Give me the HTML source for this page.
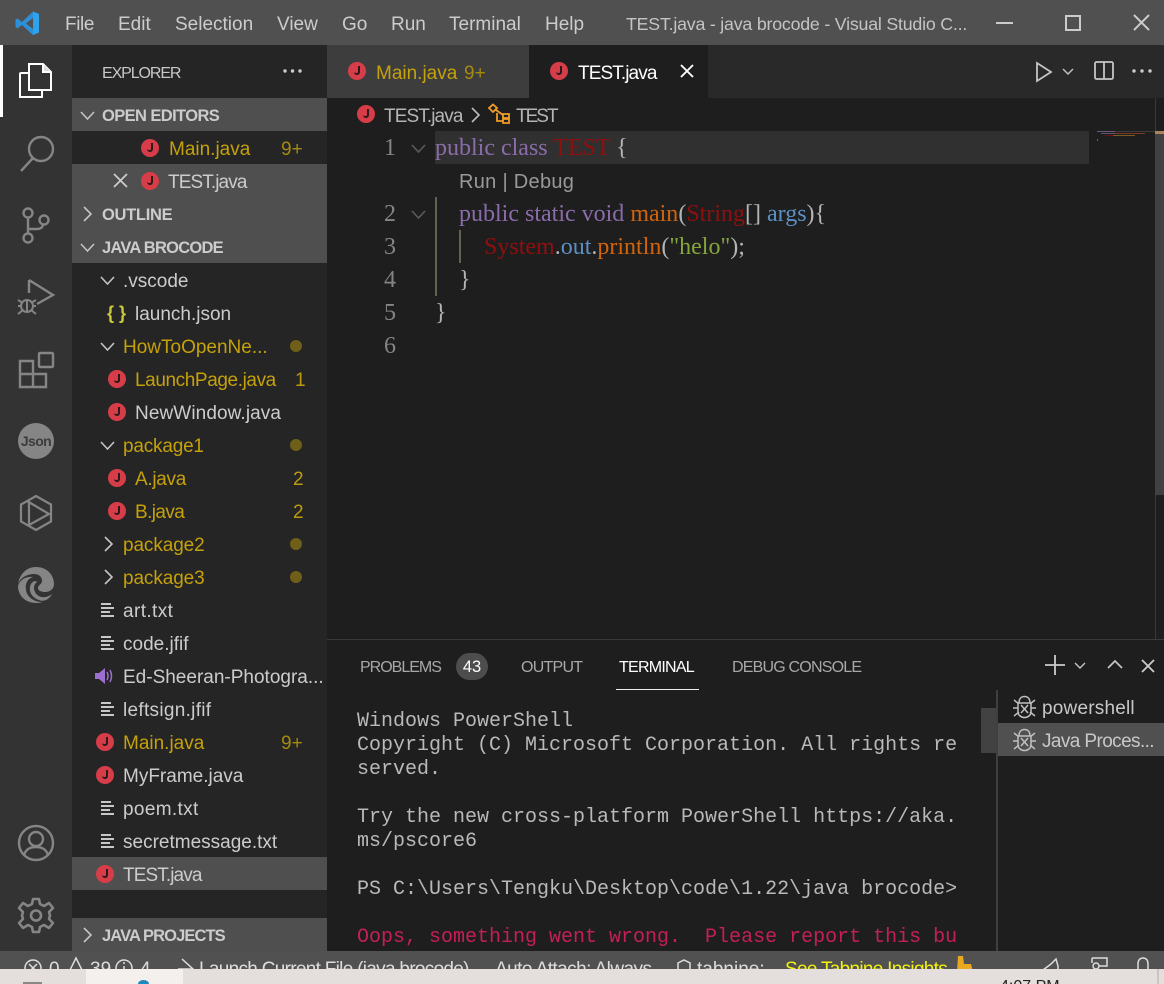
<!DOCTYPE html>
<html><head><meta charset="utf-8"><style>
html,body{margin:0;padding:0;width:1164px;height:984px;overflow:hidden;background:#1e1e1e}
body{position:relative;font-family:"Liberation Sans",sans-serif;font-size:19px;color:#ccc}
.a{position:absolute}
.t{position:absolute;white-space:pre;line-height:33px;height:33px;margin-top:2px}
.r{position:absolute;left:72px;width:255px;height:33px}
.h{font-weight:bold;font-size:16.5px;color:#ccc}
.y{color:#c5a10a}
.d{color:#a58a10}
.j{position:absolute;width:18px;height:18px;border-radius:50%;background:#d63d48}
.j:after{content:"";position:absolute;left:6px;top:4px;width:4px;height:7px;border:solid #2a1a1a;border-width:0 2px 2px 0;border-radius:0 0 3px 3px}
.dot{position:absolute;width:12px;height:12px;border-radius:50%;background:#6f5f18}
.m{position:absolute;font-family:"Liberation Mono",monospace;font-size:20px;line-height:24px;height:24px;white-space:pre;color:#b9b9b9;margin-top:2px}
.c{position:absolute;left:0;font-family:"Liberation Serif",serif;font-size:24px;line-height:33px;height:33px;white-space:pre;color:#b4b4b4;margin-top:1px}
.n{position:absolute;font-family:"Liberation Serif",serif;font-size:24px;line-height:33px;color:#858585;width:62px;text-align:right;left:334px;margin-top:1px}
.kw{color:#8a6cab}.cl{color:#8f0f0f}.fn{color:#d2640c}.v{color:#5c8fc4}.s{color:#85a53c}
.p{font-size:16px;letter-spacing:-.75px}
svg{position:absolute;overflow:visible}
</style></head><body>
<!-- title bar -->
<div class="a" style="left:0;top:0;width:1164px;height:45px;background:#505050"></div>
<svg style="left:15px;top:11px" width="25" height="25" viewBox="0 0 25 25"><path d="M18 0.5L24 3V21.5L18 24L7 14L2.5 17.5L0.5 16V8.5L2.5 7.5L7 11L18 0.5Z" fill="#2d8fd8"/><path d="M18 7L11 12.5L18 18Z" fill="#505050"/><path d="M18 0.5L24 3V21.5L18 24Z" fill="#2ea2ec"/></svg>
<span class="t" style="left:65px;top:6px;color:#ccc;letter-spacing:-.4px">File</span>
<span class="t" style="left:118px;top:6px;color:#ccc">Edit</span>
<span class="t" style="left:175px;top:6px;color:#ccc">Selection</span>
<span class="t" style="left:277px;top:6px;color:#ccc">View</span>
<span class="t" style="left:342px;top:6px;color:#ccc">Go</span>
<span class="t" style="left:391px;top:6px;color:#ccc">Run</span>
<span class="t" style="left:449px;top:6px;color:#ccc">Terminal</span>
<span class="t" style="left:545px;top:6px;color:#ccc">Help</span>
<span class="t" style="left:626px;top:6px;color:#c4c4c4;font-size:17.8px;letter-spacing:-.21px">TEST.java - java brocode - Visual Studio C...</span>
<div class="a" style="left:996px;top:22px;width:17px;height:2px;background:#ccc"></div>
<div class="a" style="left:1065px;top:15px;width:12px;height:12px;border:2px solid #ccc"></div>
<svg style="left:1133px;top:14px" width="18" height="18"><path d="M1 1L16 16M16 1L1 16" stroke="#ccc" stroke-width="2"/></svg>
<!-- activity bar -->
<div class="a" style="left:0;top:45px;width:72px;height:906px;background:#333"></div>
<div class="a" style="left:0;top:45px;width:3px;height:72px;background:#fff"></div>
<svg style="left:19px;top:63px" width="34" height="36" fill="none" stroke="#fff" stroke-width="2"><path d="M10 10H2Q1 10 1 11V34H23V28"/><path d="M10 1H24L32 9V27H10Z" fill="#333"/><path d="M24 1V9H32" fill="#ddd"/></svg>
<svg style="left:20px;top:135px" width="34" height="36" fill="none" stroke="#858585" stroke-width="2.4"><circle cx="21" cy="14" r="12"/><path d="M13 23L1 36"/></svg>
<svg style="left:22px;top:207px" width="30" height="37" fill="none" stroke="#858585" stroke-width="2.4"><circle cx="6" cy="6" r="4.5"/><circle cx="6" cy="31" r="4.5"/><circle cx="22" cy="13" r="4.5"/><path d="M6 11V26M6 22H15Q20 22 21 18"/></svg>
<svg style="left:18px;top:279px" width="37" height="38" fill="none" stroke="#858585" stroke-width="2.4"><path d="M11 1L35 16L19 25M11 1V14"/><circle cx="9" cy="27" r="6" stroke-width="2"/><path d="M0 21L5 24M18 21L13 24M0 27H4M14 27H18M0 35L5 31M18 35L13 31M9 22V33" stroke-width="2"/></svg>
<svg style="left:18px;top:351px" width="37" height="37" fill="none" stroke="#858585" stroke-width="2.4"><path d="M2 10H15V36H2ZM2 23H28V36H15"/><rect x="21" y="2" width="14" height="14" rx="1"/></svg>
<div class="a" style="left:18px;top:423px;width:36px;height:36px;border-radius:50%;background:#858585"></div>
<span class="a" style="left:18px;top:430px;width:36px;text-align:center;font:bold 14px/22px 'Liberation Sans',sans-serif;color:#3c3c3c;letter-spacing:-.6px">Json</span>
<svg style="left:20px;top:495px" width="32" height="36" fill="none" stroke="#858585" stroke-width="2.2"><path d="M16 1L31 9.5V26.5L16 35L1 26.5V9.5Z"/><path d="M9 6V30L29 19L7 6"/></svg>
<svg style="left:18px;top:567px" width="36" height="36" viewBox="0 0 36 36"><path d="M18 0C29 0 36 8 36 17C36 22 32 25 27 25C24 25 20 24 20 21C20 18 24 17 24 14C24 9 20 7 16 7C8 7 1 12 0 18C1 8 8 0 18 0Z" fill="#858585"/><path d="M0 19C2 12 9 9 15 10C9 12 7 17 8 23C9 30 16 35 24 35C22 36 20 36 18 36C8 36 0 29 0 19Z" fill="#858585"/><path d="M12 20C13 14 18 13 19 15C16 17 15 21 17 25C20 31 28 32 34 27C31 33 25 35 21 33C15 31 11 26 12 20Z" fill="#858585"/></svg>
<svg style="left:18px;top:825px" width="36" height="36" fill="none" stroke="#858585" stroke-width="2.4"><circle cx="18" cy="18" r="17"/><circle cx="18" cy="14" r="7"/><path d="M6 30C8 24 12 22 18 22C24 22 28 24 30 30"/></svg>
<svg style="left:17px;top:897px" width="38" height="37" viewBox="0 0 38 37" fill="none" stroke="#858585" stroke-width="2.6"><circle cx="19" cy="18.500" r="5"/><path d="M16 2H22L23 7L27 9L32 6L36 11L32 15L33 18.500L32 22L36 26L32 31L27 28L23 30L22 35H16L15 30L11 28L6 31L2 26L6 22L5 18.500L6 15L2 11L6 6L11 9L15 7Z" stroke-linejoin="round"/></svg>
<!-- sidebar -->
<div class="a" style="left:72px;top:45px;width:255px;height:906px;background:#252526"></div>
<span class="t" style="left:102px;top:55px;font-size:16px;color:#c8c8c8;letter-spacing:-1.1px">EXPLORER</span>
<svg style="left:283px;top:68px" width="20" height="6" fill="#ccc"><circle cx="2" cy="3" r="1.700"/><circle cx="9.500" cy="3" r="1.700"/><circle cx="17" cy="3" r="1.700"/></svg>
<div class="r" style="top:98px;background:#4f4f4f"></div>
<div class="r" style="top:164px;height:99px;background:#4f4f4f"></div>
<div class="r" style="top:857px;background:#4f4f4f"></div>
<div class="r" style="top:918px;background:#4f4f4f"></div>
<svg style="left:80px;top:111px" width="16" height="9" fill="none" stroke="#c5c5c5" stroke-width="1.600"><path d="M1 1L7.500 8L14 1"/></svg>
<span class="t h" style="left:102px;top:98px;letter-spacing:-.6px">OPEN EDITORS</span>
<div class="j" style="left:141px;top:139px"></div><span class="t y" style="left:169px;top:131px">Main.java</span><span class="t d" style="left:281px;top:131px">9+</span>
<svg style="left:113px;top:173px" width="15" height="15" fill="none" stroke="#ccc" stroke-width="1.800"><path d="M1 1L14 14M14 1L1 14"/></svg>
<div class="j" style="left:141px;top:172px"></div><span class="t" style="left:168px;top:164px;letter-spacing:-.9px">TEST.java</span>
<svg style="left:83px;top:206px" width="9" height="16" fill="none" stroke="#c5c5c5" stroke-width="1.600"><path d="M1 1L8 8L1 15"/></svg>
<span class="t h" style="left:102px;top:197px;letter-spacing:-.3px">OUTLINE</span>
<svg style="left:80px;top:243px" width="16" height="9" fill="none" stroke="#c5c5c5" stroke-width="1.600"><path d="M1 1L7.500 8L14 1"/></svg>
<span class="t h" style="left:102px;top:230px;letter-spacing:-.75px">JAVA BROCODE</span>
<svg style="left:100px;top:276px" width="16" height="9" fill="none" stroke="#c5c5c5" stroke-width="1.600"><path d="M1 1L7.500 8L14 1"/></svg>
<span class="t" style="left:123px;top:263px">.vscode</span>
<span class="t" style="left:107px;top:295px;color:#c9c93c;font-weight:bold;font-size:18px">{ }</span>
<span class="t" style="left:135px;top:296px">launch.json</span>
<svg style="left:100px;top:342px" width="16" height="9" fill="none" stroke="#c5c5c5" stroke-width="1.600"><path d="M1 1L7.500 8L14 1"/></svg>
<span class="t y" style="left:123px;top:329px">HowToOpenNe...</span><div class="dot" style="left:290px;top:340px"></div>
<div class="j" style="left:108px;top:370px"></div><span class="t y" style="left:135px;top:362px;letter-spacing:-.4px">LaunchPage.java</span><span class="t d" style="left:295px;top:362px;color:#bd9c0c">1</span>
<div class="j" style="left:108px;top:403px"></div><span class="t" style="left:135px;top:395px;letter-spacing:.1px">NewWindow.java</span>
<svg style="left:100px;top:441px" width="16" height="9" fill="none" stroke="#c5c5c5" stroke-width="1.600"><path d="M1 1L7.500 8L14 1"/></svg>
<span class="t y" style="left:123px;top:428px;letter-spacing:-.2px">package1</span><div class="dot" style="left:290px;top:439px"></div>
<div class="j" style="left:108px;top:469px"></div><span class="t y" style="left:135px;top:461px;letter-spacing:-.3px">A.java</span><span class="t d" style="left:293px;top:461px;color:#bd9c0c">2</span>
<div class="j" style="left:108px;top:502px"></div><span class="t y" style="left:135px;top:494px;letter-spacing:-.6px">B.java</span><span class="t d" style="left:293px;top:494px;color:#bd9c0c">2</span>
<svg style="left:104px;top:536px" width="9" height="16" fill="none" stroke="#c5c5c5" stroke-width="1.600"><path d="M1 1L8 8L1 15"/></svg>
<span class="t y" style="left:123px;top:527px;letter-spacing:-.1px">package2</span><div class="dot" style="left:290px;top:538px"></div>
<svg style="left:104px;top:569px" width="9" height="16" fill="none" stroke="#c5c5c5" stroke-width="1.600"><path d="M1 1L8 8L1 15"/></svg>
<span class="t y" style="left:123px;top:560px;letter-spacing:-.1px">package3</span><div class="dot" style="left:290px;top:571px"></div>
<svg style="left:101px;top:603px" width="13" height="14" stroke="#c8c8c8" stroke-width="2"><path d="M0 1H10M0 5H13M0 9H9M0 13H13"/></svg>
<span class="t" style="left:123px;top:593px;letter-spacing:.4px">art.txt</span>
<svg style="left:101px;top:636px" width="13" height="14" stroke="#c8c8c8" stroke-width="2"><path d="M0 1H10M0 5H13M0 9H9M0 13H13"/></svg>
<span class="t" style="left:123px;top:626px">code.jfif</span>
<svg style="left:95px;top:668px" width="20" height="16" fill="#9a6fd0"><path d="M0 5H4L10 0V16L4 11H0Z"/><path d="M12 4Q14 8 12 12M15 2Q18 8 15 14" fill="none" stroke="#9a6fd0" stroke-width="1.500"/></svg>
<span class="t" style="left:123px;top:659px">Ed-Sheeran-Photogra...</span>
<svg style="left:101px;top:702px" width="13" height="14" stroke="#c8c8c8" stroke-width="2"><path d="M0 1H10M0 5H13M0 9H9M0 13H13"/></svg>
<span class="t" style="left:123px;top:692px;letter-spacing:.3px">leftsign.jfif</span>
<div class="j" style="left:96px;top:733px"></div><span class="t y" style="left:123px;top:725px">Main.java</span><span class="t d" style="left:281px;top:725px">9+</span>
<div class="j" style="left:96px;top:766px"></div><span class="t" style="left:123px;top:758px">MyFrame.java</span>
<svg style="left:101px;top:801px" width="13" height="14" stroke="#c8c8c8" stroke-width="2"><path d="M0 1H10M0 5H13M0 9H9M0 13H13"/></svg>
<span class="t" style="left:123px;top:791px;letter-spacing:.35px">poem.txt</span>
<svg style="left:101px;top:834px" width="13" height="14" stroke="#c8c8c8" stroke-width="2"><path d="M0 1H10M0 5H13M0 9H9M0 13H13"/></svg>
<span class="t" style="left:123px;top:824px">secretmessage.txt</span>
<div class="j" style="left:96px;top:865px"></div><span class="t" style="left:123px;top:857px;letter-spacing:-.9px">TEST.java</span>
<svg style="left:83px;top:927px" width="9" height="16" fill="none" stroke="#c5c5c5" stroke-width="1.600"><path d="M1 1L8 8L1 15"/></svg>
<span class="t h" style="left:102px;top:918px;letter-spacing:-.9px">JAVA PROJECTS</span>
<!-- tabs -->
<div class="a" style="left:327px;top:45px;width:837px;height:53px;background:#292929"></div>
<div class="a" style="left:327px;top:45px;width:202px;height:53px;background:#3d3d3d"></div>
<div class="a" style="left:529px;top:45px;width:179px;height:53px;background:#1e1e1e"></div>
<div class="j" style="left:348px;top:62px"></div><span class="t y" style="left:376px;top:55px">Main.java</span><span class="t d" style="left:464px;top:55px">9+</span>
<div class="j" style="left:550px;top:62px"></div><span class="t" style="left:578px;top:55px;color:#fff;letter-spacing:-.9px">TEST.java</span>
<svg style="left:680px;top:64px" width="14" height="14" fill="none" stroke="#fff" stroke-width="1.900"><path d="M1 1L13 13M13 1L1 13"/></svg>
<svg style="left:1036px;top:62px" width="16" height="20" fill="none" stroke="#c5c5c5" stroke-width="1.800"><path d="M1 1L15 10L1 19Z"/></svg>
<svg style="left:1062px;top:68px" width="12" height="8" fill="none" stroke="#c5c5c5" stroke-width="1.400"><path d="M1 1L6 6L11 1"/></svg>
<svg style="left:1094px;top:61px" width="20" height="19" fill="none" stroke="#c5c5c5" stroke-width="1.800"><rect x="1" y="1" width="18" height="17" rx="1.500"/><path d="M10 1V18"/></svg>
<svg style="left:1132px;top:68px" width="20" height="6" fill="#ccc"><circle cx="2" cy="3" r="1.700"/><circle cx="10" cy="3" r="1.700"/><circle cx="18" cy="3" r="1.700"/></svg>
<!-- breadcrumb -->
<div class="j" style="left:357px;top:105px"></div><span class="t" style="left:384px;top:98px;color:#b5b5b5;letter-spacing:-.9px">TEST.java</span>
<svg style="left:471px;top:107px" width="9" height="16" fill="none" stroke="#bbb" stroke-width="1.600"><path d="M1 1L8 8L1 15"/></svg>
<svg style="left:488px;top:104px" width="23" height="20" fill="none" stroke="#ee9d28" stroke-width="1.800"><path d="M1 4L5 0.500L9 4L5 8ZM15 10H21V14H15ZM15 15H21V19H15ZM8 6L15 11M9 9V17H15"/></svg>
<span class="t" style="left:516px;top:98px;color:#b5b5b5;letter-spacing:-2px">TEST</span>
<!-- editor -->
<div class="a" style="left:435px;top:131px;width:654px;height:33px;background:#303030"></div>
<span class="n" style="top:131px">1</span><span class="n" style="top:197px">2</span><span class="n" style="top:230px">3</span><span class="n" style="top:263px">4</span><span class="n" style="top:296px">5</span><span class="n" style="top:329px">6</span>
<svg style="left:411px;top:144px" width="16" height="9" fill="none" stroke="#5c5c5c" stroke-width="1.600"><path d="M1 1L7.500 8L14 1"/></svg>
<svg style="left:411px;top:210px" width="16" height="9" fill="none" stroke="#5c5c5c" stroke-width="1.600"><path d="M1 1L7.500 8L14 1"/></svg>
<div class="a" style="left:435px;top:197px;width:2px;height:99px;background:#62624e"></div>
<div class="a" style="left:459px;top:230px;width:2px;height:33px;background:#62624e"></div>
<span class="c" style="left:435px;top:131px"><span class="kw">public class</span> <span class="cl">TEST</span> {</span>
<span class="t" style="left:459px;top:164px;color:#999;font-size:20px;letter-spacing:.3px">Run | Debug</span>
<span class="c" style="left:459px;top:197px"><span class="kw">public static void</span> <span class="fn">main</span>(<span class="cl">String</span>[] <span class="v">args</span>){</span>
<span class="c" style="left:484px;top:230px"><span class="cl">System</span>.<span class="v">out</span>.<span class="fn">println</span>(<span class="s">"helo"</span>);</span>
<span class="c" style="left:459px;top:263px">}</span>
<span class="c" style="left:435px;top:296px">}</span>
<!-- minimap -->
<div class="a" style="left:1097px;top:131px;width:58px;height:1px;background:#3a3a3a"></div>
<div class="a" style="left:1097px;top:131px;width:18px;height:1px;background:#6a5a78"></div>
<div class="a" style="left:1101px;top:133px;width:14px;height:1px;background:#5f5568"></div>
<div class="a" style="left:1115px;top:133px;width:30px;height:1px;background:#7a3a20"></div>
<div class="a" style="left:1105px;top:135px;width:8px;height:1px;background:#6f1010"></div>
<div class="a" style="left:1113px;top:135px;width:22px;height:1px;background:#7a5a20"></div>
<div class="a" style="left:1097px;top:139px;width:1px;height:2px;background:#666"></div>
<div class="a" style="left:1155px;top:98px;width:1px;height:541px;background:#3a3a3a"></div>
<div class="a" style="left:1155px;top:131px;width:9px;height:364px;background:#414141"></div>
<div class="a" style="left:1155px;top:131px;width:9px;height:3px;background:#a8865c"></div>
<!-- panel -->
<div class="a" style="left:327px;top:639px;width:837px;height:312px;background:#1e1e1e;border-top:1px solid #3a3a3a;box-sizing:border-box"></div>
<span class="t p" style="left:360px;top:649px;color:#a8a8a8;letter-spacing:-1px">PROBLEMS</span>
<div class="a" style="left:456px;top:653px;width:32px;height:27px;border-radius:14px;background:#4d4d4d"></div>
<span class="t" style="left:456px;top:649px;width:32px;text-align:center;font-size:16.5px;color:#fff">43</span>
<span class="t p" style="left:521px;top:649px;color:#a8a8a8">OUTPUT</span>
<span class="t p" style="left:619px;top:649px;color:#fff">TERMINAL</span>
<div class="a" style="left:616px;top:689px;width:83px;height:1px;background:#eee"></div>
<span class="t p" style="left:732px;top:649px;color:#a8a8a8;letter-spacing:-.8px">DEBUG CONSOLE</span>
<svg style="left:1045px;top:655px" width="20" height="20" stroke="#ccc" stroke-width="1.800"><path d="M10 0V20M0 10H20"/></svg>
<svg style="left:1074px;top:662px" width="12" height="8" fill="none" stroke="#c5c5c5" stroke-width="1.400"><path d="M1 1L6 6L11 1"/></svg>
<svg style="left:1107px;top:660px" width="16" height="9" fill="none" stroke="#c5c5c5" stroke-width="1.700"><path d="M1 8L8 1L15 8"/></svg>
<svg style="left:1141px;top:659px" width="14" height="14" fill="none" stroke="#ccc" stroke-width="1.800"><path d="M1 1L13 13M13 1L1 13"/></svg>
<span class="m" style="left:357px;top:708px">Windows PowerShell</span>
<span class="m" style="left:357px;top:732px">Copyright (C) Microsoft Corporation. All rights re</span>
<span class="m" style="left:357px;top:756px">served.</span>
<span class="m" style="left:357px;top:804px">Try the new cross-platform PowerShell https://aka.</span>
<span class="m" style="left:357px;top:828px">ms/pscore6</span>
<span class="m" style="left:357px;top:876px">PS C:\Users\Tengku\Desktop\code\1.22\java brocode&gt;</span>
<span class="m" style="left:357px;top:924px;color:#c41f56">Oops, something went wrong.  Please report this bu</span>
<div class="a" style="left:981px;top:708px;width:16px;height:45px;background:#424242"></div>
<div class="a" style="left:996px;top:690px;width:2px;height:261px;background:#3f3f3f"></div>
<div class="a" style="left:998px;top:723px;width:166px;height:33px;background:#505050"></div>
<svg style="left:1013px;top:695px" width="23" height="24" fill="none" stroke="#c0c0c0" stroke-width="1.500"><path d="M6 8C6 4 8 1.500 11.500 1.500C15 1.500 17 4 17 8M5 8H18V17C18 20 15 22.500 11.500 22.500C8 22.500 5 20 5 17ZM8 10L15 18M15 10L8 18M0 13H5M18 13H23M1 5L6 9M22 5L17 9M1 21L6 17M22 21L17 17"/></svg>
<span class="t" style="left:1042px;top:690px;color:#c8c8c8;letter-spacing:.2px">powershell</span>
<svg style="left:1013px;top:728px" width="23" height="24" fill="none" stroke="#c0c0c0" stroke-width="1.500"><path d="M6 8C6 4 8 1.500 11.500 1.500C15 1.500 17 4 17 8M5 8H18V17C18 20 15 22.500 11.500 22.500C8 22.500 5 20 5 17ZM8 10L15 18M15 10L8 18M0 13H5M18 13H23M1 5L6 9M22 5L17 9M1 21L6 17M22 21L17 17"/></svg>
<span class="t" style="left:1042px;top:723px;color:#c8c8c8;letter-spacing:-.6px">Java Proces...</span>
<!-- status bar -->
<div class="a" style="left:0;top:951px;width:1164px;height:18px;background:#515151;overflow:hidden">
<svg style="left:24px;top:8px" width="20" height="20" fill="none" stroke="#ddd" stroke-width="1.500"><circle cx="9" cy="9" r="8"/><path d="M5 5L13 13M13 5L5 13"/></svg>
<span class="t" style="left:49px;top:0;color:#ddd">0</span>
<svg style="left:68px;top:6px" width="18" height="18" fill="none" stroke="#ddd" stroke-width="1.500"><path d="M8 1L16 17H0Z"/></svg>
<span class="t" style="left:90px;top:0;color:#ddd">39</span>
<svg style="left:115px;top:8px" width="20" height="20" fill="none" stroke="#ddd" stroke-width="1.500"><circle cx="9" cy="9" r="8"/><path d="M9 7V14M9 3V5"/></svg>
<span class="t" style="left:140px;top:0;color:#ddd">4</span>
<svg style="left:176px;top:7px" width="18" height="16" fill="none" stroke="#ddd" stroke-width="1.500"><path d="M6 1L17 11H2"/></svg>
<span class="t" style="left:199px;top:0;color:#ddd;letter-spacing:-.7px">Launch Current File (java brocode)</span>
<span class="t" style="left:495px;top:0;color:#ddd;letter-spacing:-.55px">Auto Attach: Always</span>
<svg style="left:677px;top:8px" width="14" height="16" fill="none" stroke="#ddd" stroke-width="1.500"><path d="M1 4L7 1L13 4V15H1Z"/></svg>
<span class="t" style="left:697px;top:0;color:#ddd">tabnine:</span>
<span class="t" style="left:785px;top:0;color:#f2f20d;letter-spacing:-.7px">See Tabnine Insights</span>
<svg style="left:954px;top:5px" width="20" height="16" fill="#e9a820"><path d="M4 0H9L10 8H17L19 16H3Z"/></svg>
<svg style="left:1042px;top:7px" width="20" height="14" fill="none" stroke="#ddd" stroke-width="1.500"><path d="M1 12L9 6L14 1L16 8V14"/></svg>
<svg style="left:1091px;top:6px" width="18" height="14" fill="none" stroke="#ddd" stroke-width="1.500"><path d="M1 1H16V9H8M1 1V6"/><circle cx="5" cy="9" r="3"/></svg>
<svg style="left:1136px;top:6px" width="16" height="14" fill="none" stroke="#ddd" stroke-width="1.500"><path d="M2 14V7C2 3 4 1 7 1C10 1 12 3 12 7V14"/></svg>
</div>
<!-- taskbar -->
<div class="a" style="left:0;top:969px;width:1164px;height:15px;background:#e4dfdc;overflow:hidden">
<div class="a" style="left:86px;top:0;width:97px;height:15px;background:#f3f0ee"></div>
<div class="a" style="left:23px;top:13px;width:19px;height:2px;background:#888"></div>
<div class="a" style="left:138px;top:11px;width:11px;height:8px;border-radius:50%;background:#1f8ac0"></div>
<div class="a" style="left:1157px;top:0;width:2px;height:15px;background:#c9c5c2"></div>
<span class="a" style="left:1000px;top:8px;font-size:16px;line-height:20px;color:#222;white-space:pre">4:07 PM</span>
</div>
</body></html>
